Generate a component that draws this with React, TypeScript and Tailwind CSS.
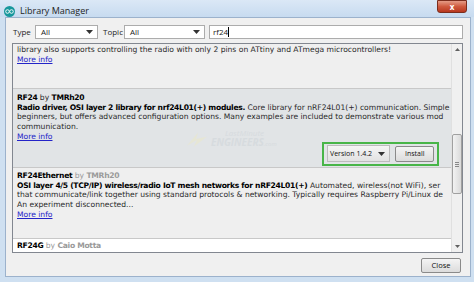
import React from "react";

const listFont = { fontFamily: '"DejaVu Sans", Verdana, sans-serif' };
const uiFont = { fontFamily: '"Open Sans", "Noto Sans", sans-serif' };

function Arrow() {
  return (
    <svg width="7" height="4" viewBox="0 0 7 4" className="shrink-0">
      <path d="M0 0 L7 0 L3.5 4 Z" fill="#333" />
    </svg>
  );
}

function Select({ w, label }: { w: string; label: string }) {
  return (
    <div
      className={`${w} h-[14px] bg-white border border-[#acacac] flex items-center justify-between pl-[5px] pr-[4px] text-[8px] text-[#222]`}
    >
      <span>{label}</span>
      <Arrow />
    </div>
  );
}

function MoreInfo() {
  return <div className="text-[#2424c8] underline underline-offset-[1px]">More info</div>;
}

function B({ children, gray }: { children: React.ReactNode; gray?: boolean }) {
  return (
    <span className={`font-bold tracking-[-0.3px] ${gray ? "text-[#9a9a9a]" : "text-black"}`}>{children}</span>
  );
}

export default function App() {
  return (
    <div className="w-[474px] h-[282px] overflow-hidden bg-[#cfe0f1] flex flex-col relative" style={uiFont}>
      {/* title bar */}
      <div className="h-[17px] flex items-center bg-gradient-to-b from-[#dbe8f6] to-[#c7dbf0] shrink-0">
        <svg width="11" height="11" viewBox="0 0 22 22" className="ml-[4px] mt-[5px]">
          <circle cx="11" cy="11" r="11" fill="#16979c" />
          <circle cx="7" cy="11" r="3.6" fill="none" stroke="#fff" strokeWidth="1.8" />
          <circle cx="15" cy="11" r="3.6" fill="none" stroke="#fff" strokeWidth="1.8" />
        </svg>
        <span className="ml-[5px] mt-[5px] text-[9px] text-[#1e1e1e]">Library Manager</span>
        <div className="ml-auto mr-[7px] self-start w-[30px] h-[13px] rounded-b-[3px] bg-gradient-to-b from-[#e49b86] via-[#cf5a3f] to-[#b8381f] border border-[#7b2d1d] flex items-center justify-center">
          <span className="text-white text-[8px] font-bold leading-none">x</span>
        </div>
      </div>

      {/* client */}
      <div className="ml-[5px] mr-[3px] h-[260px] bg-[#f0f0f0] border border-[#9cb2cc] flex flex-col shrink-0">
        {/* filter row */}
        <div className="h-[24px] flex items-center pl-[7px] text-[8px] text-[#222] pt-[4px]">
          <span className="w-[22px]">Type</span>
          <Select w="w-[63px]" label="All" />
          <span className="ml-[5px] w-[21px]">Topic</span>
          <Select w="w-[81px]" label="All" />
          <div className="ml-[4px] w-[254px] h-[14px] bg-white border border-[#acacac] flex items-center pl-[3px] text-[8px] text-[#222]">
            rf24<span className="w-px h-[10px] bg-black" />
          </div>
        </div>

        {/* list */}
        <div className="ml-[6px] mt-[1px] w-[451px] h-[210px] border border-[#828790] bg-white flex" style={listFont}>
          <div className="flex-1 flex flex-col text-[7.6px] leading-[9.7px] text-[#2a2a2a] relative overflow-hidden">
            {/* item 1 */}
            <div className="h-[45px] bg-[#efefef] px-[4px] pt-[1px] border-b border-[#c8c8c8] whitespace-nowrap overflow-hidden">
              <div>library also supports controlling the radio with only 2 pins on ATtiny and ATmega microcontrollers!</div>
              <MoreInfo />
            </div>
            {/* item 2 */}
            <div className="h-[79px] bg-[#e1e4e6] px-[4px] pt-[4px] border-b border-[#c8c8c8] whitespace-nowrap overflow-hidden flex flex-col">
              <div>
                <B>RF24</B> by <B>TMRh20</B>
              </div>
              <div>
                <B>Radio driver, OSI layer 2 library for nrf24L01(+) modules.</B> Core library for nRF24L01(+) communication. Simple
              </div>
              <div>beginners, but offers advanced configuration options. Many examples are included to demonstrate various mod</div>
              <div>communication.</div>
              <MoreInfo />
              <div className="flex justify-end pr-[8px]">
                <div className="w-[117px] h-[24px] border-2 border-[#48b548] flex items-center gap-[5px] px-[3px]">
                  <div className="w-[64px] h-[17px] bg-gradient-to-b from-[#f5f5f5] to-[#e2e2e2] border border-[#bcbcbc] flex items-center justify-between pl-[2px] pr-[4px] text-[7px] text-[#111]" style={uiFont}>
                    <span>Version 1.4.2</span>
                    <Arrow />
                  </div>
                  <div className="w-[39px] h-[16px] rounded-[2px] bg-gradient-to-b from-[#f4f4f4] to-[#dcdcdc] border border-[#8a8a8a] flex items-center justify-center text-[7px] text-[#111]" style={uiFont}>
                    Install
                  </div>
                </div>
              </div>
            </div>
            {/* item 3 */}
            <div className="h-[71px] bg-[#efefef] px-[4px] pt-[3px] border-b border-[#c8c8c8] whitespace-nowrap overflow-hidden">
              <div>
                <B>RF24Ethernet</B> <span className="text-[#9a9a9a]">by</span> <B gray>TMRh20</B>
              </div>
              <div>
                <B>OSI layer 4/5 (TCP/IP) wireless/radio IoT mesh networks for nRF24L01(+)</B> Automated, wireless(not WiFi), ser
              </div>
              <div>that communicate/link together using standard protocols &amp; networking. Typically requires Raspberry Pi/Linux de</div>
              <div>An experiment disconnected...</div>
              <MoreInfo />
            </div>
            {/* item 4 */}
            <div className="flex-1 bg-white px-[4px] pt-[2px] whitespace-nowrap">
              <B>RF24G</B> <span className="text-[#9a9a9a]">by</span> <B gray>Caio Motta</B>
            </div>

            {/* watermark */}
            <div className="absolute left-[172px] top-[84px] flex items-center gap-[2px] opacity-50 pointer-events-none">
              <svg width="24" height="18" viewBox="0 0 22 16">
                <path d="M2 14 L12 2 L10 8 L20 6 L8 15 L11 9 Z" fill="#ece9c6" />
              </svg>
              <div className="flex flex-col italic" style={uiFont}>
                <span className="block text-[8px] leading-[9px] text-[#cdd3d8] ml-[14px]">LastMinute</span>
                <span className="block text-[10px] leading-[11px] font-bold text-[#cdd3d8]">ENGINEERS<span className="text-[6px] font-normal">.com</span></span>
              </div>
            </div>
          </div>

          {/* scrollbar */}
          <div className="w-[11px] bg-[#f0f0f0] border-l border-[#e0e0e0] flex flex-col items-center">
            <div className="h-[11px] flex items-center justify-center">
              <svg width="5" height="3" viewBox="0 0 5 3"><path d="M0 3 L5 3 L2.5 0 Z" fill="#606060" /></svg>
            </div>
            <div className="mt-[79px] w-[10px] h-[60px] rounded-[2px] border border-[#a0a0a0] bg-gradient-to-r from-[#f2f2f2] to-[#dadada] flex flex-col items-center justify-center gap-[1px]">
              <div className="w-[4px] h-px bg-[#888]" />
              <div className="w-[4px] h-px bg-[#888]" />
              <div className="w-[4px] h-px bg-[#888]" />
            </div>
            <div className="mt-auto h-[11px] flex items-center justify-center">
              <svg width="5" height="3" viewBox="0 0 5 3"><path d="M0 0 L5 0 L2.5 3 Z" fill="#606060" /></svg>
            </div>
          </div>
        </div>

        {/* footer */}
        <div className="flex justify-end mt-[5px] pr-[9px]">
          <div className="w-[40px] h-[15px] rounded-[2px] bg-gradient-to-b from-[#f4f4f4] to-[#dcdcdc] border border-[#8a8a8a] flex items-center justify-center text-[7.5px] text-[#111]">
            Close
          </div>
        </div>
      </div>
    </div>
  );
}
